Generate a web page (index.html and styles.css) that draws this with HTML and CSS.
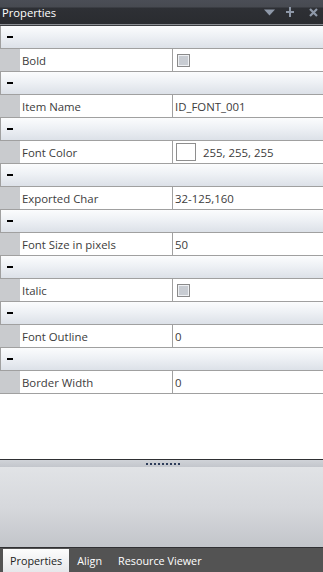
FILE: index.html
```html
<html>
<head><link rel="stylesheet" href="styles.css"></head>
<body>
<div class="panel">
  <div class="caption">
    <span class="title">Properties</span>
    <span class="buttons">
      <svg width="11" height="7" viewBox="0 0 11 7"><path d="M0 0.5 H11 L5.5 6.5 Z" fill="#8e98a8"/></svg>
      <svg width="8" height="10" viewBox="0 0 8 10"><path d="M3 0 H5 V4 H8 V6 H5 V10 H3 V6 H0 V4 H3 Z" fill="#8e98a8"/></svg>
      <svg width="9" height="9" viewBox="0 0 9 9"><path d="M1 1 L8 8 M8 1 L1 8" stroke="#8e98a8" stroke-width="2.2"/></svg>
    </span>
  </div>

  <div class="grid">
    <div class="cat"><span class="minus"></span></div>
    <div class="prop"><div class="gut"></div><div class="name">Bold</div><div class="val"><span class="check"></span></div></div>

    <div class="cat"><span class="minus"></span></div>
    <div class="prop"><div class="gut"></div><div class="name">Item Name</div><div class="val">ID_FONT_001</div></div>

    <div class="cat"><span class="minus"></span></div>
    <div class="prop"><div class="gut"></div><div class="name">Font Color</div><div class="val"><span class="swatch"></span>255, 255, 255</div></div>

    <div class="cat"><span class="minus"></span></div>
    <div class="prop"><div class="gut"></div><div class="name">Exported Char</div><div class="val">32-125,160</div></div>

    <div class="cat"><span class="minus"></span></div>
    <div class="prop"><div class="gut"></div><div class="name">Font Size in pixels</div><div class="val">50</div></div>

    <div class="cat"><span class="minus"></span></div>
    <div class="prop"><div class="gut"></div><div class="name">Italic</div><div class="val"><span class="check"></span></div></div>

    <div class="cat"><span class="minus"></span></div>
    <div class="prop"><div class="gut"></div><div class="name">Font Outline</div><div class="val">0</div></div>

    <div class="cat"><span class="minus"></span></div>
    <div class="prop"><div class="gut"></div><div class="name">Border Width</div><div class="val">0</div></div>
  </div>

  <div class="splitter"><span class="grip"></span></div>
  <div class="help"></div>

  <div class="tabs">
    <div class="tab current">Properties</div>
    <div class="tab">Align</div>
    <div class="tab">Resource Viewer</div>
  </div>
</div>
</body>
</html>
```

FILE: styles.css
```css
body
{
  margin: 0;
  font-family: "Open Sans", "DejaVu Sans", sans-serif;
  font-size: 11.4px;
}

.panel
{
  width: 323px;
  height: 572px;
  display: flex;
  flex-direction: column;
  background: #fff;
}

/* caption bar */
.caption
{
  height: 24px;
  flex: none;
  display: flex;
  align-items: center;
  justify-content: space-between;
  background: linear-gradient(#4b4e56 0, #474a51 7px, #2e3035 8px, #2a2c30 100%);
  border-bottom: 1px solid #8c8f94;
  box-shadow: 0 1px 0 #3a3c40;
  margin-bottom: 1px;
}
.caption .title
{
  color: #fff;
  font-size: 11.2px;
  padding-left: 2px;
  padding-top: 1px;
}
.caption .buttons
{
  display: flex;
  align-items: center;
  padding-right: 5px;
}
.caption .buttons svg:nth-child(2) { margin-left: 11px; }
.caption .buttons svg:nth-child(3) { margin-left: 15px; }

/* property grid */
.grid
{
  flex: 1;
  background: #fff;
}
.cat
{
  height: 23px;
  box-sizing: border-box;
  border-bottom: 1px solid #a0a0a0;
  border-left: 1px solid #a0a0a0;
  background: linear-gradient(#fbfcfd, #eef1f5 45%, #dce1e8);
  display: flex;
  align-items: center;
}
.minus
{
  width: 6px;
  height: 2px;
  background: #000;
  margin-left: 6px;
}
.prop
{
  height: 23px;
  box-sizing: border-box;
  border-bottom: 1px solid #a0a0a0;
  display: flex;
  color: #3c3c3c;
}
.prop .gut
{
  width: 20px;
  background: #c9cbce;
}
.prop .name
{
  width: 150px;
  padding-left: 2px;
  border-right: 1px solid #a0a0a0;
  display: flex;
  align-items: center;
}
.prop .val
{
  flex: 1;
  padding-left: 2px;
  display: flex;
  align-items: center;
}
.check
{
  width: 11px;
  height: 11px;
  border: 1px solid #8a8a8a;
  background: #c8ccd2;
  box-shadow: inset 0 0 0 1px #eef0f3;
  margin-left: 2px;
}
.swatch
{
  width: 18px;
  height: 16px;
  border: 1px solid #8e8e8e;
  background: #fff;
  margin-left: 1px;
  margin-right: 7px;
}

/* splitter and description area */
.splitter
{
  height: 7px;
  flex: none;
  border-top: 1px solid #2f3033;
  background: linear-gradient(#d0d3d8, #c3c6cc);
  display: flex;
  justify-content: center;
  align-items: center;
}
.grip
{
  width: 34px;
  height: 2px;
  margin-left: 2px;
  background: repeating-linear-gradient(90deg, #2e3d5a 0 2px, transparent 2px 4px);
}
.help
{
  height: 80px;
  flex: none;
  background: linear-gradient(#e1e3e6, #d6d8dc 50%, #c2c5ca);
  border-bottom: 1px solid #303033;
}

/* tab strip */
.tabs
{
  height: 24px;
  flex: none;
  background: #535353;
  display: flex;
  align-items: stretch;
  padding-left: 3px;
  font-size: 10.8px;
}
.tab
{
  color: #fff;
  padding: 0 8px;
  display: flex;
  align-items: center;
}
.tab.current
{
  color: #222;
  padding: 0 7px;
  background: linear-gradient(#fdfdfd, #e6e7ea);
  margin-top: 1px;
}
```
